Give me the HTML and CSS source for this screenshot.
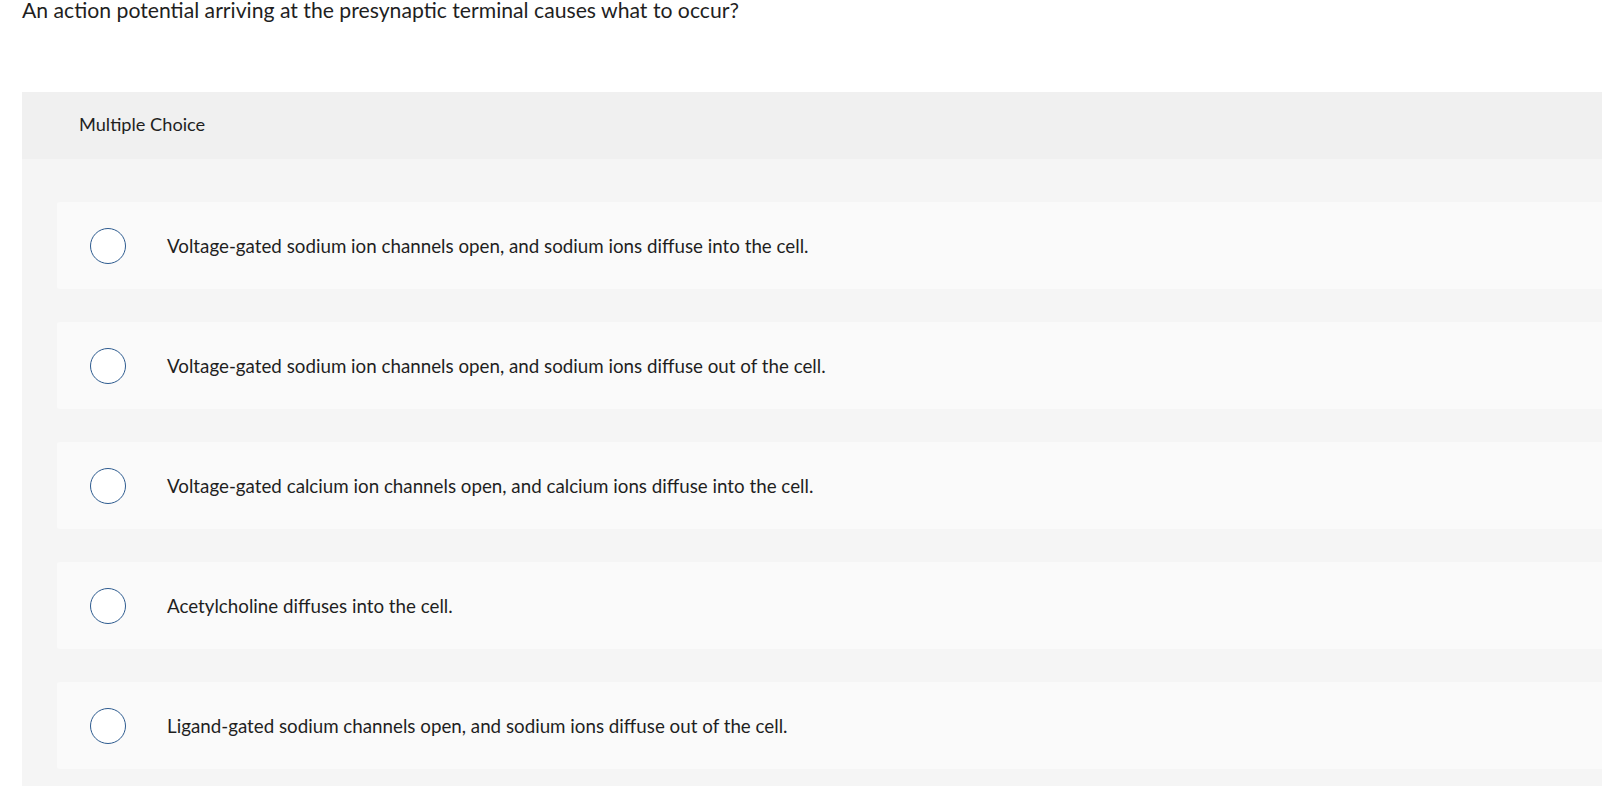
FILE: index.html
```html
<!DOCTYPE html>
<html lang="en">
<head>
<meta charset="utf-8">
<title>Multiple Choice</title>
<link rel="stylesheet" href="styles.css">
</head>
<body>
<p class="question">An action potential arriving at the presynaptic terminal causes what to occur?</p>
<section class="panel">
  <div class="panel-head">Multiple Choice</div>
  <div class="panel-body">
    <label class="choice"><span class="radio"></span><span class="choice-text">Voltage-gated sodium ion channels open, and sodium ions diffuse into the cell.</span></label>
    <label class="choice"><span class="radio"></span><span class="choice-text">Voltage-gated sodium ion channels open, and sodium ions diffuse out of the cell.</span></label>
    <label class="choice"><span class="radio"></span><span class="choice-text">Voltage-gated calcium ion channels open, and calcium ions diffuse into the cell.</span></label>
    <label class="choice"><span class="radio"></span><span class="choice-text">Acetylcholine diffuses into the cell.</span></label>
    <label class="choice"><span class="radio"></span><span class="choice-text">Ligand-gated sodium channels open, and sodium ions diffuse out of the cell.</span></label>
  </div>
</section>
</body>
</html>
```
FILE: styles.css
```css
html, body {
  margin: 0;
  padding: 0;
  background: #ffffff;
  overflow: hidden;
}
body {
  font-family: Lato, "Liberation Sans", sans-serif;
  color: #1f1f1f;
}
.question {
  margin: 0;
  padding: 0 0 0 22px;
  font-size: 21.2px;
  line-height: 20px;
  height: 92px;
}
.panel {
  margin: 0 -60px 0 22px;
}
.panel-head {
  background: #f0f0f0;
  height: 67px;
  box-sizing: border-box;
  padding: 22px 0 0 57px;
  font-size: 18.2px;
  line-height: 20px;
}
.panel-body {
  background: #f5f5f5;
  padding: 43px 0 40px 35px;
  display: flex;
  flex-direction: column;
  gap: 33px;
}
.choice {
  display: flex;
  align-items: center;
  height: 87px;
  background: #fafafa;
  border-radius: 3px;
  padding-left: 33px;
}
.radio {
  flex: none;
  width: 34px;
  height: 34px;
  border: 1px solid #2d5b8f;
  border-radius: 50%;
  background: #ffffff;
}
.choice-text {
  margin-left: 41px;
  font-size: 18.75px;
  line-height: 20px;
}
```
